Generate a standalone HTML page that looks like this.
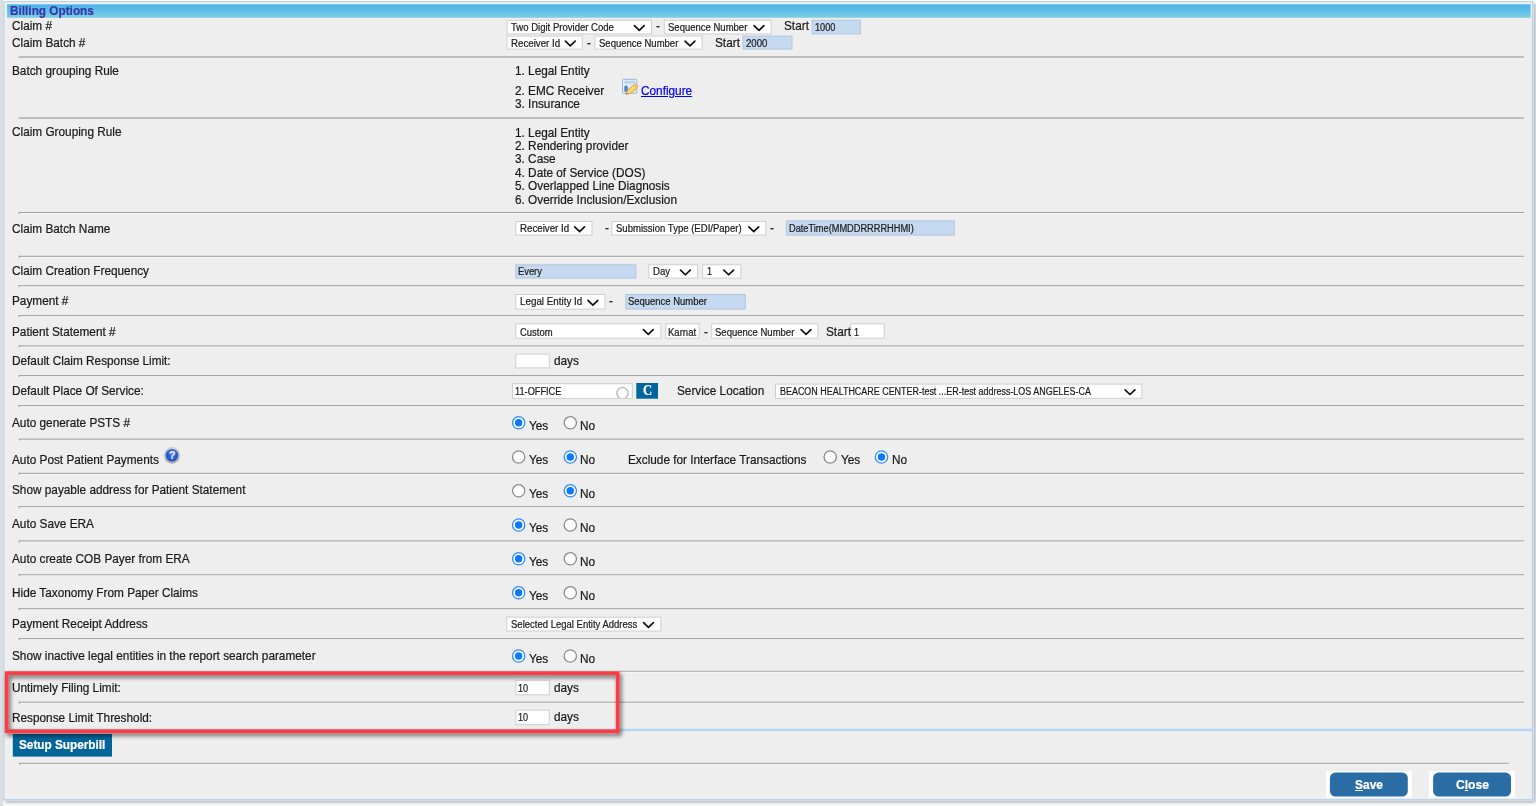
<!DOCTYPE html>
<html lang="en"><head><meta charset="utf-8"><title>Billing Options</title>
<style>
html,body{margin:0;padding:0;background:#fff;}
body{width:1536px;height:806px;overflow:hidden;position:relative;font-family:"Liberation Sans",sans-serif;}
#g{position:absolute;left:0;top:0;}
.t,.s{position:absolute;white-space:pre;line-height:14px;font-size:12.4px;color:#1a1a1a;-webkit-text-stroke-width:0.22px;font-family:"Liberation Sans",sans-serif;transform-origin:0 50%;transform:scaleX(.952);}
.s{color:#1c1c1c;}
.b{font-weight:bold;}
u{text-decoration:underline;}
</style></head><body>
<svg id="g" width="1536" height="806" viewBox="0 0 1536 806">
<defs>
<linearGradient id="hg" x1="0" y1="0" x2="0" y2="1"><stop offset="0" stop-color="#4bb4e9"/><stop offset="0.45" stop-color="#5dbce7"/><stop offset="1" stop-color="#80cfe2"/></linearGradient>
<radialGradient id="hb" cx="0.5" cy="0.3" r="0.8"><stop offset="0" stop-color="#4a78e0"/><stop offset="0.6" stop-color="#2758d0"/><stop offset="1" stop-color="#2a55c4"/></radialGradient>
<linearGradient id="hr" x1="0" y1="0" x2="0" y2="1"><stop offset="0" stop-color="#d2d2d2"/><stop offset="0.6" stop-color="#c2c2c2"/><stop offset="1" stop-color="#a8a8a8"/></linearGradient>
<filter id="sh" x="-1%" y="-1%" width="102%" height="102%"><feDropShadow dx="2.2" dy="2.2" stdDeviation="1.7" flood-color="#000" flood-opacity="0.3"/></filter>
<filter id="rs" x="-2%" y="-20%" width="104%" height="140%"><feDropShadow dx="1.8" dy="2.6" stdDeviation="2" flood-color="#000" flood-opacity="0.62"/></filter>
</defs>
<rect x="0.00" y="0.00" width="3.30" height="806.00" fill="#dedede" />
<g filter="url(#sh)"><rect x="3.3" y="1" width="1530.2" height="799.5" fill="#eee"/></g>
<rect x="4.05" y="1.75" width="1528.60" height="727.65" fill="#eeeeee" stroke="#b3d3f7" stroke-width="1.4" />
<rect x="4.05" y="730.90" width="1528.60" height="68.85" fill="#eeeeee" stroke="#b3d3f7" stroke-width="1.4" />
<rect x="4.75" y="2.45" width="1527.15" height="1.85" fill="#f4f0ee" />
<rect x="4.75" y="2.45" width="2.35" height="726.25" fill="#f4f0ee" />
<rect x="4.75" y="731.60" width="1527.15" height="1.80" fill="#f4f0ee" />
<rect x="4.75" y="731.60" width="2.35" height="67.40" fill="#f4f0ee" />
<rect x="7.10" y="4.30" width="1523.50" height="13.50" fill="url(#hg)" />
<rect x="18.75" y="56.00" width="1505.05" height="2" fill="#bdbdbd"/>
<rect x="18.75" y="117.00" width="1505.05" height="2" fill="#bdbdbd"/>
<rect x="18.75" y="213.00" width="1505.05" height="1" fill="#f6f6f6"/>
<rect x="18.75" y="212.00" width="1505.05" height="1" fill="#9e9e9e"/>
<rect x="18.75" y="212.00" width="1" height="2" fill="#9e9e9e"/>
<rect x="18.75" y="256.80" width="1505.05" height="1" fill="#f6f6f6"/>
<rect x="18.75" y="255.80" width="1505.05" height="1" fill="#9e9e9e"/>
<rect x="18.75" y="255.80" width="1" height="2" fill="#9e9e9e"/>
<rect x="18.75" y="286.20" width="1505.05" height="1" fill="#f6f6f6"/>
<rect x="18.75" y="285.20" width="1505.05" height="1" fill="#9e9e9e"/>
<rect x="18.75" y="285.20" width="1" height="2" fill="#9e9e9e"/>
<rect x="18.75" y="316.10" width="1505.05" height="1" fill="#f6f6f6"/>
<rect x="18.75" y="315.10" width="1505.05" height="1" fill="#9e9e9e"/>
<rect x="18.75" y="315.10" width="1" height="2" fill="#9e9e9e"/>
<rect x="18.75" y="346.40" width="1505.05" height="1" fill="#f6f6f6"/>
<rect x="18.75" y="345.40" width="1505.05" height="1" fill="#9e9e9e"/>
<rect x="18.75" y="345.40" width="1" height="2" fill="#9e9e9e"/>
<rect x="18.75" y="376.10" width="1505.05" height="1" fill="#f6f6f6"/>
<rect x="18.75" y="375.10" width="1505.05" height="1" fill="#9e9e9e"/>
<rect x="18.75" y="375.10" width="1" height="2" fill="#9e9e9e"/>
<rect x="18.75" y="406.10" width="1505.05" height="1" fill="#f6f6f6"/>
<rect x="18.75" y="405.10" width="1505.05" height="1" fill="#9e9e9e"/>
<rect x="18.75" y="405.10" width="1" height="2" fill="#9e9e9e"/>
<rect x="18.75" y="439.60" width="1505.05" height="1" fill="#f6f6f6"/>
<rect x="18.75" y="438.60" width="1505.05" height="1" fill="#9e9e9e"/>
<rect x="18.75" y="438.60" width="1" height="2" fill="#9e9e9e"/>
<rect x="18.75" y="473.80" width="1505.05" height="1" fill="#f6f6f6"/>
<rect x="18.75" y="472.80" width="1505.05" height="1" fill="#9e9e9e"/>
<rect x="18.75" y="472.80" width="1" height="2" fill="#9e9e9e"/>
<rect x="18.75" y="507.10" width="1505.05" height="1" fill="#f6f6f6"/>
<rect x="18.75" y="506.10" width="1505.05" height="1" fill="#9e9e9e"/>
<rect x="18.75" y="506.10" width="1" height="2" fill="#9e9e9e"/>
<rect x="18.75" y="541.40" width="1505.05" height="1" fill="#f6f6f6"/>
<rect x="18.75" y="540.40" width="1505.05" height="1" fill="#9e9e9e"/>
<rect x="18.75" y="540.40" width="1" height="2" fill="#9e9e9e"/>
<rect x="18.75" y="575.25" width="1505.05" height="1" fill="#f6f6f6"/>
<rect x="18.75" y="574.25" width="1505.05" height="1" fill="#9e9e9e"/>
<rect x="18.75" y="574.25" width="1" height="2" fill="#9e9e9e"/>
<rect x="18.75" y="609.20" width="1505.05" height="1" fill="#f6f6f6"/>
<rect x="18.75" y="608.20" width="1505.05" height="1" fill="#9e9e9e"/>
<rect x="18.75" y="608.20" width="1" height="2" fill="#9e9e9e"/>
<rect x="18.75" y="639.10" width="1505.05" height="1" fill="#f6f6f6"/>
<rect x="18.75" y="638.10" width="1505.05" height="1" fill="#9e9e9e"/>
<rect x="18.75" y="638.10" width="1" height="2" fill="#9e9e9e"/>
<rect x="18.75" y="702.70" width="1505.05" height="1" fill="#f6f6f6"/>
<rect x="18.75" y="701.70" width="1505.05" height="1" fill="#9e9e9e"/>
<rect x="18.75" y="701.70" width="1" height="2" fill="#9e9e9e"/>
<rect x="619" y="670.8" width="904.8" height="1" fill="#9e9e9e"/><rect x="619" y="671.8" width="904.8" height="1" fill="#f6f6f6"/>
<rect x="19.2" y="763.80" width="1489.50" height="1" fill="#f6f6f6"/>
<rect x="19.2" y="762.80" width="1489.50" height="1" fill="#9e9e9e"/>
<rect x="19.2" y="762.80" width="1" height="2" fill="#9e9e9e"/>
<rect x="507.00" y="20.20" width="144.50" height="13.70" fill="#fff" stroke="#cfcfcf" stroke-width="1" />
<path d="M634.40,25.65 L639.30,30.35 L644.20,25.65" fill="none" stroke="#111" stroke-width="1.7" stroke-linecap="round" stroke-linejoin="round"/>
<rect x="664.30" y="20.20" width="106.90" height="13.70" fill="#fff" stroke="#cfcfcf" stroke-width="1" />
<path d="M754.10,25.65 L759.00,30.35 L763.90,25.65" fill="none" stroke="#111" stroke-width="1.7" stroke-linecap="round" stroke-linejoin="round"/>
<rect x="812.20" y="20.20" width="48.10" height="13.70" fill="#c5d9f1" stroke="#b4c6dd" stroke-width="1" />
<rect x="507.00" y="36.10" width="75.25" height="13.00" fill="#fff" stroke="#cfcfcf" stroke-width="1" />
<path d="M565.40,41.20 L570.30,45.90 L575.20,41.20" fill="none" stroke="#111" stroke-width="1.7" stroke-linecap="round" stroke-linejoin="round"/>
<rect x="594.90" y="36.10" width="107.10" height="13.00" fill="#fff" stroke="#cfcfcf" stroke-width="1" />
<path d="M685.10,41.20 L690.00,45.90 L694.90,41.20" fill="none" stroke="#111" stroke-width="1.7" stroke-linecap="round" stroke-linejoin="round"/>
<rect x="743.00" y="36.10" width="49.00" height="13.00" fill="#c5d9f1" stroke="#b4c6dd" stroke-width="1" />
<rect x="515.80" y="221.50" width="76.20" height="13.60" fill="#fff" stroke="#cfcfcf" stroke-width="1" />
<path d="M574.70,226.90 L579.60,231.60 L584.50,226.90" fill="none" stroke="#111" stroke-width="1.7" stroke-linecap="round" stroke-linejoin="round"/>
<rect x="611.80" y="221.50" width="154.00" height="13.60" fill="#fff" stroke="#cfcfcf" stroke-width="1" />
<path d="M748.85,226.90 L753.75,231.60 L758.65,226.90" fill="none" stroke="#111" stroke-width="1.7" stroke-linecap="round" stroke-linejoin="round"/>
<rect x="786.30" y="220.90" width="167.90" height="14.20" fill="#c5d9f1" stroke="#b4c6dd" stroke-width="1" />
<rect x="515.80" y="264.80" width="120.00" height="13.30" fill="#c5d9f1" stroke="#b4c6dd" stroke-width="1" />
<rect x="648.80" y="264.80" width="48.70" height="13.30" fill="#fff" stroke="#cfcfcf" stroke-width="1" />
<path d="M680.50,270.05 L685.40,274.75 L690.30,270.05" fill="none" stroke="#111" stroke-width="1.7" stroke-linecap="round" stroke-linejoin="round"/>
<rect x="702.70" y="264.80" width="38.10" height="13.30" fill="#fff" stroke="#cfcfcf" stroke-width="1" />
<path d="M723.80,270.05 L728.70,274.75 L733.60,270.05" fill="none" stroke="#111" stroke-width="1.7" stroke-linecap="round" stroke-linejoin="round"/>
<rect x="515.80" y="294.50" width="89.20" height="14.60" fill="#fff" stroke="#cfcfcf" stroke-width="1" />
<path d="M588.00,300.40 L592.90,305.10 L597.80,300.40" fill="none" stroke="#111" stroke-width="1.7" stroke-linecap="round" stroke-linejoin="round"/>
<rect x="625.80" y="294.50" width="119.50" height="14.60" fill="#c5d9f1" stroke="#b4c6dd" stroke-width="1" />
<rect x="515.80" y="323.80" width="145.00" height="14.40" fill="#fff" stroke="#cfcfcf" stroke-width="1" />
<path d="M643.40,329.60 L648.30,334.30 L653.20,329.60" fill="none" stroke="#111" stroke-width="1.7" stroke-linecap="round" stroke-linejoin="round"/>
<rect x="665.80" y="323.80" width="33.40" height="14.40" fill="#fff" stroke="#cfcfcf" stroke-width="1" />
<rect x="711.70" y="323.80" width="106.10" height="14.40" fill="#fff" stroke="#cfcfcf" stroke-width="1" />
<path d="M801.10,329.60 L806.00,334.30 L810.90,329.60" fill="none" stroke="#111" stroke-width="1.7" stroke-linecap="round" stroke-linejoin="round"/>
<rect x="850.80" y="323.80" width="33.40" height="14.40" fill="#fff" stroke="#cfcfcf" stroke-width="1" />
<rect x="515.80" y="354.10" width="33.40" height="13.80" fill="#fff" stroke="#cfcfcf" stroke-width="1" />
<rect x="512.50" y="383.80" width="119.80" height="14.80" fill="#fff" stroke="#cfcfcf" stroke-width="1" />
<clipPath id="cp"><rect x="513" y="384.3" width="118.8" height="13.8"/></clipPath><circle cx="622.5" cy="393.2" r="5.6" fill="none" stroke="#bdbdbd" stroke-width="1.5" clip-path="url(#cp)"/>
<rect x="636.30" y="383.00" width="21.70" height="15.70" fill="#00669b" />
<rect x="775.50" y="384.10" width="366.30" height="14.20" fill="#fff" stroke="#cfcfcf" stroke-width="1" />
<path d="M1125.10,389.80 L1130.00,394.50 L1134.90,389.80" fill="none" stroke="#111" stroke-width="1.7" stroke-linecap="round" stroke-linejoin="round"/>
<circle cx="518.65" cy="422.8" r="6.15" fill="#fff" stroke="#2f8cff" stroke-width="1.3"/><circle cx="518.65" cy="422.8" r="3.7" fill="#0a78ff"/>
<circle cx="570.3" cy="422.8" r="6.15" fill="#fff" stroke="#8a8a8a" stroke-width="1.3"/>
<circle cx="518.65" cy="457" r="6.15" fill="#fff" stroke="#8a8a8a" stroke-width="1.3"/>
<circle cx="570.3" cy="457" r="6.15" fill="#fff" stroke="#2f8cff" stroke-width="1.3"/><circle cx="570.3" cy="457" r="3.7" fill="#0a78ff"/>
<circle cx="518.65" cy="490.8" r="6.15" fill="#fff" stroke="#8a8a8a" stroke-width="1.3"/>
<circle cx="570.3" cy="490.8" r="6.15" fill="#fff" stroke="#2f8cff" stroke-width="1.3"/><circle cx="570.3" cy="490.8" r="3.7" fill="#0a78ff"/>
<circle cx="518.65" cy="525" r="6.15" fill="#fff" stroke="#2f8cff" stroke-width="1.3"/><circle cx="518.65" cy="525" r="3.7" fill="#0a78ff"/>
<circle cx="570.3" cy="525" r="6.15" fill="#fff" stroke="#8a8a8a" stroke-width="1.3"/>
<circle cx="518.65" cy="558.8" r="6.15" fill="#fff" stroke="#2f8cff" stroke-width="1.3"/><circle cx="518.65" cy="558.8" r="3.7" fill="#0a78ff"/>
<circle cx="570.3" cy="558.8" r="6.15" fill="#fff" stroke="#8a8a8a" stroke-width="1.3"/>
<circle cx="518.65" cy="592.8" r="6.15" fill="#fff" stroke="#2f8cff" stroke-width="1.3"/><circle cx="518.65" cy="592.8" r="3.7" fill="#0a78ff"/>
<circle cx="570.3" cy="592.8" r="6.15" fill="#fff" stroke="#8a8a8a" stroke-width="1.3"/>
<circle cx="518.65" cy="656" r="6.15" fill="#fff" stroke="#2f8cff" stroke-width="1.3"/><circle cx="518.65" cy="656" r="3.7" fill="#0a78ff"/>
<circle cx="570.3" cy="656" r="6.15" fill="#fff" stroke="#8a8a8a" stroke-width="1.3"/>
<circle cx="830.2" cy="457" r="6.15" fill="#fff" stroke="#8a8a8a" stroke-width="1.3"/>
<circle cx="881.5" cy="457" r="6.15" fill="#fff" stroke="#2f8cff" stroke-width="1.3"/><circle cx="881.5" cy="457" r="3.7" fill="#0a78ff"/>
<rect x="506.80" y="617.20" width="154.00" height="13.80" fill="#fff" stroke="#cfcfcf" stroke-width="1" />
<path d="M643.60,622.70 L648.50,627.40 L653.40,622.70" fill="none" stroke="#111" stroke-width="1.7" stroke-linecap="round" stroke-linejoin="round"/>
<rect x="515.80" y="680.20" width="33.40" height="14.60" fill="#fff" stroke="#cfcfcf" stroke-width="1" />
<rect x="515.80" y="710.20" width="33.40" height="14.50" fill="#fff" stroke="#cfcfcf" stroke-width="1" />
<circle cx="172" cy="455.4" r="8.3" fill="url(#hr)"/><circle cx="172" cy="455.3" r="6.3" fill="url(#hb)"/>
<g transform="translate(622,78.8)">
<rect x="0.5" y="0.5" width="14.3" height="14" rx="1" fill="#e3ecf9" stroke="#9db5da"/>
<rect x="2.4" y="2" width="10.6" height="2.8" fill="#b5d2f0"/>
<rect x="2.3" y="6.6" width="3.5" height="6.6" rx="1.6" fill="#4f82c4"/>
<g transform="translate(9.9 10.7) rotate(-40)">
<rect x="-5" y="-2.3" width="11.6" height="4.6" rx="1.7" fill="#f2d548" stroke="#dfa35a" stroke-width="0.9"/>
<rect x="-4.2" y="-0.9" width="8" height="1.3" fill="#f8e98a"/>
<rect x="3.6" y="-2.4" width="3.3" height="4.8" rx="1.7" fill="#ecbd8a"/>
<path d="M-4.8,-2.2 L-7.6,0 L-4.8,2.2 Z" fill="#e6b074"/><path d="M-6.5,-0.9 L-7.9,0 L-6.5,0.9 Z" fill="#5a2f06"/></g>
</g>
<rect x="12.80" y="733.90" width="99.20" height="22.70" fill="#01659a" />
<rect x="6.6" y="673.1" width="611.05" height="58.15" fill="none" stroke="#f93d43" stroke-width="3.7" filter="url(#rs)"/>
<rect x="1325.90" y="771.20" width="85.90" height="26.40" fill="#fff" />
<rect x="1329.90" y="772.60" width="77.90" height="24.00" fill="#2a6ca4" rx="5.5" />
<rect x="1428.80" y="771.20" width="86.10" height="26.40" fill="#fff" />
<rect x="1433.10" y="772.60" width="77.90" height="24.00" fill="#2a6ca4" rx="5.5" />
</svg>
<span class="t b" style="left:10.10px;top:4px;color:#3638a6;">Billing Options</span>
<span class="t" style="left:12.20px;top:19px;">Claim #</span>
<span class="t" style="left:12.20px;top:36px;">Claim Batch #</span>
<span class="t" style="left:12.20px;top:64px;">Batch grouping Rule</span>
<span class="t" style="left:12.20px;top:125px;">Claim Grouping Rule</span>
<span class="t" style="left:12.20px;top:222px;">Claim Batch Name</span>
<span class="t" style="left:12.20px;top:264px;">Claim Creation Frequency</span>
<span class="t" style="left:12.20px;top:294px;">Payment #</span>
<span class="t" style="left:12.20px;top:325px;">Patient Statement #</span>
<span class="t" style="left:12.20px;top:354px;">Default Claim Response Limit:</span>
<span class="t" style="left:12.20px;top:384px;">Default Place Of Service:</span>
<span class="t" style="left:12.20px;top:416px;">Auto generate PSTS #</span>
<span class="t" style="left:12.20px;top:453px;">Auto Post Patient Payments</span>
<span class="t" style="left:12.20px;top:483px;">Show payable address for Patient Statement</span>
<span class="t" style="left:12.20px;top:517px;">Auto Save ERA</span>
<span class="t" style="left:12.20px;top:552px;">Auto create COB Payer from ERA</span>
<span class="t" style="left:12.20px;top:586px;">Hide Taxonomy From Paper Claims</span>
<span class="t" style="left:12.20px;top:617px;">Payment Receipt Address</span>
<span class="t" style="left:12.20px;top:649px;">Show inactive legal entities in the report search parameter</span>
<span class="t" style="left:12.20px;top:681px;">Untimely Filing Limit:</span>
<span class="t" style="left:12.20px;top:711px;">Response Limit Threshold:</span>
<span class="s" style="left:510.75px;top:21px;font-size:10.0px;transform:scaleX(0.9543);">Two Digit Provider Code</span>
<span class="t" style="left:656.20px;top:19px;">-</span>
<span class="s" style="left:667.80px;top:21px;font-size:10.0px;transform:scaleX(0.9510);">Sequence Number</span>
<span class="t" style="left:784.00px;top:19px;">Start</span>
<span class="s" style="left:815.30px;top:21px;font-size:10.0px;transform:scaleX(0.9170);">1000</span>
<span class="s" style="left:510.75px;top:37px;font-size:10.0px;transform:scaleX(0.9708);">Receiver Id</span>
<span class="t" style="left:586.80px;top:36px;">-</span>
<span class="s" style="left:598.50px;top:37px;font-size:10.0px;transform:scaleX(0.9510);">Sequence Number</span>
<span class="t" style="left:714.80px;top:36px;">Start</span>
<span class="s" style="left:745.70px;top:37px;font-size:10.0px;transform:scaleX(0.9619);">2000</span>
<span class="t" style="left:515.30px;top:64px;">1. Legal Entity</span>
<span class="t" style="left:515.30px;top:84px;">2. EMC Receiver</span>
<span class="t" style="left:515.30px;top:97px;">3. Insurance</span>
<span class="t" style="left:641.20px;top:84px;color:#0000ee;text-decoration:underline;">Configure</span>
<span class="t" style="left:515.30px;top:126px;">1. Legal Entity</span>
<span class="t" style="left:515.30px;top:139px;">2. Rendering provider</span>
<span class="t" style="left:515.30px;top:152px;">3. Case</span>
<span class="t" style="left:515.30px;top:166px;">4. Date of Service (DOS)</span>
<span class="t" style="left:515.30px;top:179px;">5. Overlapped Line Diagnosis</span>
<span class="t" style="left:515.30px;top:193px;">6. Override Inclusion/Exclusion</span>
<span class="s" style="left:519.50px;top:222px;font-size:10.0px;transform:scaleX(0.9708);">Receiver Id</span>
<span class="t" style="left:604.80px;top:221px;">-</span>
<span class="s" style="left:616.20px;top:222px;font-size:10.0px;transform:scaleX(0.9548);">Submission Type (EDI/Paper)</span>
<span class="t" style="left:769.80px;top:221px;">-</span>
<span class="s" style="left:789.00px;top:222px;font-size:10.0px;transform:scaleX(0.9225);">DateTime(MMDDRRRRHHMI)</span>
<span class="s" style="left:518.20px;top:265px;font-size:10.0px;transform:scaleX(0.9350);">Every</span>
<span class="s" style="left:652.50px;top:265px;font-size:10.0px;transform:scaleX(0.9616);">Day</span>
<span class="s" style="left:706.50px;top:265px;font-size:10.0px;transform:scaleX(0.9050);">1</span>
<span class="s" style="left:519.50px;top:295px;font-size:10.0px;transform:scaleX(0.9815);">Legal Entity Id</span>
<span class="t" style="left:609.00px;top:294px;">-</span>
<span class="s" style="left:628.20px;top:295px;font-size:10.0px;transform:scaleX(0.9462);">Sequence Number</span>
<span class="s" style="left:519.50px;top:326px;font-size:10.0px;transform:scaleX(0.9462);">Custom</span>
<span class="s" style="left:668.20px;top:326px;font-size:10.0px;transform:scaleX(0.9537);">Karnat</span>
<span class="t" style="left:703.50px;top:325px;">-</span>
<span class="s" style="left:714.80px;top:326px;font-size:10.0px;transform:scaleX(0.9510);">Sequence Number</span>
<span class="t" style="left:825.60px;top:325px;">Start</span>
<span class="s" style="left:853.70px;top:326px;font-size:10.0px;transform:scaleX(0.9050);">1</span>
<span class="t" style="left:553.90px;top:354px;">days</span>
<span class="s" style="left:514.80px;top:385px;font-size:10.0px;transform:scaleX(0.9210);">11-OFFICE</span>
<span class="t b" style="left:642.90px;top:384px;font-size:14px;transform:scaleX(0.9);color:#fff;font-family:'Liberation Serif',serif;">C</span>
<span class="t" style="left:677.40px;top:384px;">Service Location</span>
<span class="s" style="left:779.50px;top:385px;font-size:10.0px;transform:scaleX(0.8942);">BEACON HEALTHCARE CENTER-test ...ER-test address-LOS ANGELES-CA</span>
<span class="t" style="left:528.90px;top:419px;">Yes</span>
<span class="t" style="left:580.20px;top:419px;">No</span>
<span class="t" style="left:528.90px;top:453px;">Yes</span>
<span class="t" style="left:580.20px;top:453px;">No</span>
<span class="t" style="left:528.90px;top:487px;">Yes</span>
<span class="t" style="left:580.20px;top:487px;">No</span>
<span class="t" style="left:528.90px;top:521px;">Yes</span>
<span class="t" style="left:580.20px;top:521px;">No</span>
<span class="t" style="left:528.90px;top:555px;">Yes</span>
<span class="t" style="left:580.20px;top:555px;">No</span>
<span class="t" style="left:528.90px;top:589px;">Yes</span>
<span class="t" style="left:580.20px;top:589px;">No</span>
<span class="t" style="left:528.90px;top:652px;">Yes</span>
<span class="t" style="left:580.20px;top:652px;">No</span>
<span class="t" style="left:628.40px;top:453px;">Exclude for Interface Transactions</span>
<span class="t" style="left:841.00px;top:453px;">Yes</span>
<span class="t" style="left:891.80px;top:453px;">No</span>
<span class="s" style="left:510.80px;top:618px;font-size:10.0px;transform:scaleX(0.9506);">Selected Legal Entity Address</span>
<span class="s" style="left:518.30px;top:682px;font-size:10.0px;transform:scaleX(0.9050);">10</span>
<span class="t" style="left:553.90px;top:681px;">days</span>
<span class="s" style="left:518.30px;top:711px;font-size:10.0px;transform:scaleX(0.9050);">10</span>
<span class="t" style="left:553.90px;top:710px;">days</span>
<span class="t b" style="left:169.10px;top:448px;font-size:10.5px;transform:scaleX(1);color:#e9eefb;">?</span>
<span class="t b" style="left:19.30px;top:738px;font-size:13.0px;transform:scaleX(0.905);color:#fff;">Setup Superbill</span>
<span class="t b" style="left:1355.40px;top:778px;transform:scaleX(0.965);color:#fff;"><u>S</u>ave</span>
<span class="t b" style="left:1455.60px;top:778px;transform:scaleX(0.975);color:#fff;">C<u>l</u>ose</span>
</body></html>
